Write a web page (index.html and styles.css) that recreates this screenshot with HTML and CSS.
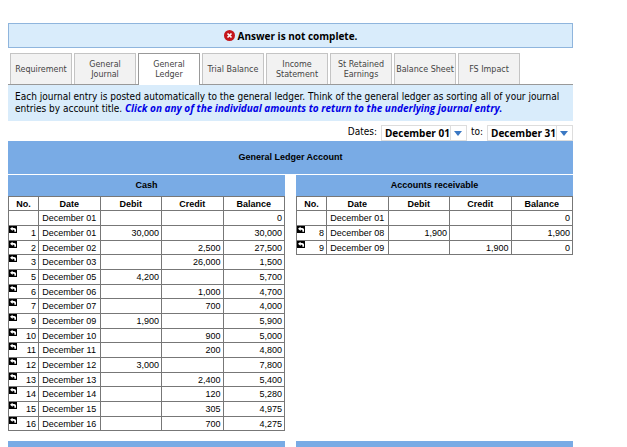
FILE: index.html
```html
<!DOCTYPE html>
<html lang="en">
<head>
<meta charset="utf-8">
<title>General Ledger</title>
<link rel="stylesheet" href="styles.css">
</head>
<body>
<svg class="defs" aria-hidden="true">
  <symbol id="back" viewBox="0 0 8 7"><rect width="8" height="7" fill="#000"/><path d="M1 2.8 3.6 .7V2H5.2Q7 2.1 7 3.6V5.8H5.4V4.4Q5.4 3.8 4.6 3.8H3.6V5Z" fill="#fff"/></symbol>
</svg>
<main class="page">
  <div class="banner" role="status">
    <svg class="error" viewBox="0 0 11 11" aria-hidden="true"><circle cx="5.5" cy="5.5" r="5.5" fill="#c4161c"/><path d="M3.5 3.5l4 4M7.5 3.5l-4 4" stroke="#fff" stroke-width="1.7"/></svg>
    <span>Answer is not complete.</span>
  </div>
  <nav class="tabs">
    <button class="tab">Requirement</button>
    <button class="tab">General<br>Journal</button>
    <button class="tab active">General<br>Ledger</button>
    <button class="tab">Trial Balance</button>
    <button class="tab">Income<br>Statement</button>
    <button class="tab">St Retained<br>Earnings</button>
    <button class="tab">Balance Sheet</button>
    <button class="tab">FS Impact</button>
  </nav>
  <p class="intro">Each journal entry is posted automatically to the general ledger. Think of the general ledger as sorting all of your journal entries by account title. <strong>Click on any of the individual amounts to return to the underlying journal entry.</strong></p>
  <div class="dates">
    <label for="from">Dates:</label>
    <span class="picker"><select id="from"><option>December 01</option></select><svg viewBox="0 0 8 5" aria-hidden="true"><path d="M0 0h8L4 5z"/></svg></span>
    <label for="to">to:</label>
    <span class="picker"><select id="to"><option>December 31</option></select><svg viewBox="0 0 8 5" aria-hidden="true"><path d="M0 0h8L4 5z"/></svg></span>
  </div>
  <h1 class="heading">General Ledger Account</h1>
  <div class="accounts">
    <table class="ledger">
      <caption>Cash</caption>
      <colgroup><col class="no"><col><col><col><col></colgroup>
      <thead><tr><th>No.</th><th>Date</th><th>Debit</th><th>Credit</th><th>Balance</th></tr></thead>
      <tbody>
        <tr><td></td><td>December 01</td><td></td><td></td><td>0</td></tr>
        <tr><td><svg><use href="#back"/></svg>1</td><td>December 01</td><td>30,000</td><td></td><td>30,000</td></tr>
        <tr><td><svg><use href="#back"/></svg>2</td><td>December 02</td><td></td><td>2,500</td><td>27,500</td></tr>
        <tr><td><svg><use href="#back"/></svg>3</td><td>December 03</td><td></td><td>26,000</td><td>1,500</td></tr>
        <tr><td><svg><use href="#back"/></svg>5</td><td>December 05</td><td>4,200</td><td></td><td>5,700</td></tr>
        <tr><td><svg><use href="#back"/></svg>6</td><td>December 06</td><td></td><td>1,000</td><td>4,700</td></tr>
        <tr><td><svg><use href="#back"/></svg>7</td><td>December 07</td><td></td><td>700</td><td>4,000</td></tr>
        <tr><td><svg><use href="#back"/></svg>9</td><td>December 09</td><td>1,900</td><td></td><td>5,900</td></tr>
        <tr><td><svg><use href="#back"/></svg>10</td><td>December 10</td><td></td><td>900</td><td>5,000</td></tr>
        <tr><td><svg><use href="#back"/></svg>11</td><td>December 11</td><td></td><td>200</td><td>4,800</td></tr>
        <tr><td><svg><use href="#back"/></svg>12</td><td>December 12</td><td>3,000</td><td></td><td>7,800</td></tr>
        <tr><td><svg><use href="#back"/></svg>13</td><td>December 13</td><td></td><td>2,400</td><td>5,400</td></tr>
        <tr><td><svg><use href="#back"/></svg>14</td><td>December 14</td><td></td><td>120</td><td>5,280</td></tr>
        <tr><td><svg><use href="#back"/></svg>15</td><td>December 15</td><td></td><td>305</td><td>4,975</td></tr>
        <tr><td><svg><use href="#back"/></svg>16</td><td>December 16</td><td></td><td>700</td><td>4,275</td></tr>
      </tbody>
    </table>
    <table class="ledger">
      <caption>Accounts receivable</caption>
      <colgroup><col class="no"><col><col><col><col></colgroup>
      <thead><tr><th>No.</th><th>Date</th><th>Debit</th><th>Credit</th><th>Balance</th></tr></thead>
      <tbody>
        <tr><td></td><td>December 01</td><td></td><td></td><td>0</td></tr>
        <tr><td><svg><use href="#back"/></svg>8</td><td>December 08</td><td>1,900</td><td></td><td>1,900</td></tr>
        <tr><td><svg><use href="#back"/></svg>9</td><td>December 09</td><td></td><td>1,900</td><td>0</td></tr>
      </tbody>
    </table>
    <div class="next"></div>
    <div class="next"></div>
  </div>
</main>
</body>
</html>
```
FILE: styles.css
```css
* { box-sizing: border-box; }
body { margin: 0; background: #fff; color: #000; font-family: "DejaVu Sans Condensed", "DejaVu Sans", sans-serif; }
.defs { display: none; }
.page { padding: 23px 54px 0 8px; }
.banner { display: flex; align-items: center; justify-content: center; gap: 3px; height: 25px; border: 1px solid #8fb5dd; background: #d9ecfb; font: bold 10px "Open Sans", sans-serif; }
.error { width: 11px; height: 11px; }
.tabs { display: flex; gap: 2px; margin-top: 5px; padding-left: 2px; border-bottom: 1px solid #999; }
.tab { flex: 0 0 62px; height: 31px; padding: 1px 0 0; border: 1px solid #c4c4c4; border-bottom: 0; background: #f2f2f2; color: #444; font: 8px/10px "DejaVu Sans", sans-serif; white-space: nowrap; }
.tab.active { height: 32px; margin-bottom: -1px; border-color: #999; background: #fff; }
.intro { margin: 0; padding: 6px 7px; background: #d9ecfb; font-size: 10px; line-height: 12px; }
.intro strong { color: #0000e6; font-family: "Open Sans", sans-serif; font-style: italic; line-height: 1; }
.dates { display: flex; justify-content: flex-end; margin-top: 4px; font-size: 10px; line-height: 14px; }
.dates label { margin: 0 4px; }
.picker { position: relative; width: 86px; height: 16px; border: 1px solid #ddd; }
.picker select { appearance: none; width: 100%; height: 100%; margin: 0; padding: 0 0 0 3px; border: 0; background: linear-gradient(#ddd, #ddd) 68px 0 / 1px 100% no-repeat #fff; color: #000; font: bold 10px "Open Sans", sans-serif; }
.picker svg { position: absolute; right: 4px; top: 5px; width: 8px; height: 5px; fill: #3a78c3; pointer-events: none; }
.heading { margin: 0; background: #79abe5; font: bold 9px/33px "Liberation Sans", sans-serif; text-align: center; }
.accounts { display: grid; grid-template-columns: 1fr 1fr; align-items: start; gap: 10px 11px; margin-top: 1px; }
.ledger { width: 100%; border-collapse: collapse; table-layout: fixed; font: 9px/12px "Liberation Sans", sans-serif; }
.ledger caption { height: 21px; background: #79abe5; font-weight: bold; line-height: 21px; }
.ledger .no { width: 30px; }
.ledger th, .ledger td { height: 15px; padding: 0 2px; border: 1px solid #777; text-align: right; }
.ledger tbody tr:nth-child(3n) td { height: 14px; }
.ledger th { height: 14px; text-align: center; }
.ledger td:nth-child(2) { text-align: center; }
.ledger td svg { float: left; width: 8px; height: 7px; margin: -1px 0 0 -2px; }
.next { height: 6px; background: #79abe5; }
```
